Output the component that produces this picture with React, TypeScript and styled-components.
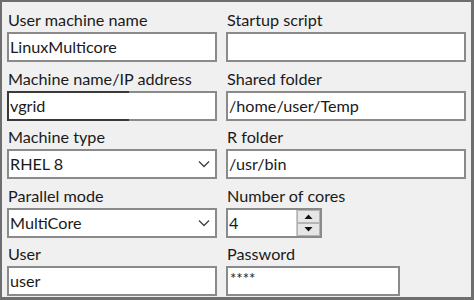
import React from "react";
import styled, { createGlobalStyle } from "styled-components";

const Global = createGlobalStyle`
  html, body { margin: 0; padding: 0; background: #f0f0f0; }
  body { width: 474px; height: 300px; overflow: hidden; }
`;

const Frame = styled.div`
  box-sizing: border-box;
  width: 474px;
  height: 300px;
  background: #f0f0f0;
  border-style: solid;
  border-color: #6e6e6e;
  border-width: 2px 3px 3px 2px;
  padding: 7px 0 0 5px;
  display: grid;
  grid-template-columns: 212px 250px;
  column-gap: 7px;
  row-gap: 5.5px;
  grid-auto-rows: 53px;
  font-family: Lato, "Noto Sans", sans-serif;
  font-size: 16.2px;
  color: #1a1a1a;
`;

const Field = styled.div`
  display: flex;
  flex-direction: column;
`;

const Label = styled.div`
  height: 23px;
  line-height: 23px;
  padding-left: 1px;
  white-space: nowrap;
  margin-top: -1px;
  margin-bottom: 1px;
`;

const Box = styled.div<{ $w: number }>`
  box-sizing: border-box;
  width: ${(p) => p.$w}px;
  height: 30px;
  border: 2px solid #8a8a8a;
  background: #ffffff;
  display: flex;
  align-items: center;
  position: relative;
`;

const Value = styled.span<{ $stars?: boolean }>`
  flex: 1;
  padding-left: 1px;
  white-space: nowrap;
  line-height: 26px;
  ${(p) => (p.$stars ? "font-size: 15px; position: relative; top: -3px; padding-left: 2px;" : "")}
`;

const Chevron = styled.svg`
  width: 12px;
  height: 8px;
  margin-right: 5px;
`;

const Spin = styled.div`
  width: 23px;
  height: 26px;
  display: flex;
  flex-direction: column;
  border-left: 1px solid #c8c8c8;
`;

const SpinBtn = styled.div`
  flex: 1;
  background: #e6e6e6;
  border: 1px solid #b4b4b4;
  display: flex;
  align-items: center;
  justify-content: center;
`;

const FocusEdge = styled.div`
  position: absolute;
  left: -2px;
  top: -2px;
  bottom: -2px;
  width: 120px;
  border-top: 2px solid #3a3a3a;
  border-bottom: 2px solid #3a3a3a;
  border-left: 2px solid #3a3a3a;
`;

function DownChevron() {
  return (
    <Chevron viewBox="0 0 12 8">
      <path d="M1 1.5 L6 6.5 L11 1.5" fill="none" stroke="#404040" strokeWidth="1.3" />
    </Chevron>
  );
}

function Triangle({ up }: { up?: boolean }) {
  return (
    <svg width="9" height="5" viewBox="0 0 9 5">
      <path d={up ? "M0.5 5 L4.5 0.5 L8.5 5 Z" : "M0.5 0 L4.5 4.5 L8.5 0 Z"} fill="#111" />
    </svg>
  );
}

export default function App() {
  return (
    <>
      <Global />
      <Frame>
        <Field>
          <Label>User machine name</Label>
          <Box $w={210}><Value>LinuxMulticore</Value></Box>
        </Field>
        <Field>
          <Label>Startup script</Label>
          <Box $w={240}><Value /></Box>
        </Field>

        <Field>
          <Label>Machine name/IP address</Label>
          <Box $w={210}>
            <FocusEdge />
            <Value>vgrid</Value>
          </Box>
        </Field>
        <Field>
          <Label>Shared folder</Label>
          <Box $w={240}><Value>/home/user/Temp</Value></Box>
        </Field>

        <Field>
          <Label>Machine type</Label>
          <Box $w={210}>
            <Value>RHEL 8</Value>
            <DownChevron />
          </Box>
        </Field>
        <Field>
          <Label>R folder</Label>
          <Box $w={240}><Value>/usr/bin</Value></Box>
        </Field>

        <Field>
          <Label>Parallel mode</Label>
          <Box $w={210}>
            <Value>MultiCore</Value>
            <DownChevron />
          </Box>
        </Field>
        <Field>
          <Label>Number of cores</Label>
          <Box $w={96}>
            <Value>4</Value>
            <Spin>
              <SpinBtn><Triangle up /></SpinBtn>
              <SpinBtn><Triangle /></SpinBtn>
            </Spin>
          </Box>
        </Field>

        <Field>
          <Label>User</Label>
          <Box $w={210}><Value>user</Value></Box>
        </Field>
        <Field>
          <Label>Password</Label>
          <Box $w={174}><Value $stars>****</Value></Box>
        </Field>
      </Frame>
    </>
  );
}
